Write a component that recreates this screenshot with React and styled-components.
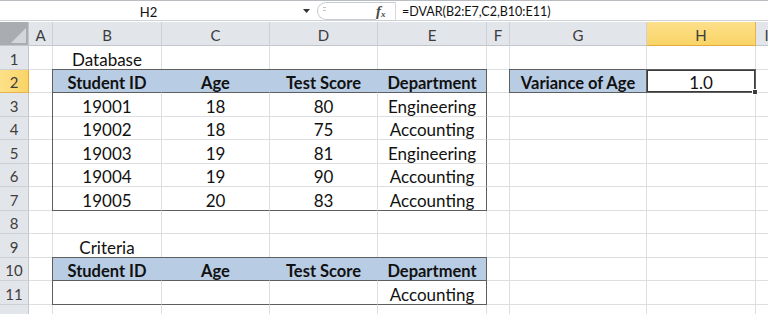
import React from 'react'
import styled, { createGlobalStyle } from 'styled-components';

const GRID = '#dcdfe2';
const DARK = '#5e5e5e';
const BLUE = '#b8cce4';
const HEAD_BG = '#e2e5e9';
const HEAD_LINE = '#c3c7cc';

const GlobalStyle = createGlobalStyle`
  body {
    margin: 0;
    background: #fff;
    overflow: hidden;
    font-family: Lato, "Liberation Sans", sans-serif;
  }
`;

const COLS = ['A', 'B', 'C', 'D', 'E', 'F', 'G', 'H', 'I'];
const COL_WIDTHS = '29px 24px 109px 108px 108px 109px 23px 137px 109px 22px';
const ROW_HEIGHTS = '24px 24px 23px 24px 23px 24px 23px 24px 23px 24px 23px 24px 30px';

// table ranges: header row first, then data rows
const tables = [
  {
    top: 2, left: 'B',
    rows: [
      ['Student ID', 'Age', 'Test Score', 'Department'],
      ['19001', '18', '80', 'Engineering'],
      ['19002', '18', '75', 'Accounting'],
      ['19003', '19', '81', 'Engineering'],
      ['19004', '19', '90', 'Accounting'],
      ['19005', '20', '83', 'Accounting'],
    ],
  },
  {
    top: 10, left: 'B',
    rows: [
      ['Student ID', 'Age', 'Test Score', 'Department'],
      ['', '', '', 'Accounting'],
    ],
  },
];

const buildCells = () => {
  const cells = {};
  const put = (r, c, spec) => { cells[`${c}${r}`] = spec; };
  put(1, 'B', { v: 'Database' });
  put(9, 'B', { v: 'Criteria' });
  tables.forEach((t) => {
    const c0 = COLS.indexOf(t.left);
    const last = t.rows.length - 1;
    t.rows.forEach((row, i) => {
      row.forEach((v, j) => {
        put(t.top + i, COLS[c0 + j], {
          v,
          fill: i === 0,
          bold: i === 0,
          t: i === 0,
          b: i === 0 || i === last,
          l: j === 0,
          r: j === row.length - 1,
        });
      });
    });
  });
  put(2, 'G', { v: 'Variance of Age', fill: true, bold: true, t: true, b: true, l: true, r: true });
  put(2, 'H', { v: '1.0', selected: true });
  return cells;
};

const cells = buildCells();

const App = () => {
  const rows = Array.from({ length: 12 }, (_, i) => i + 1);
  return (
    <Wrap>
      <GlobalStyle />
      <FormulaBar>
        <NameBox>H2</NameBox>
        <DropArrow>
          <svg width="7" height="4" viewBox="0 0 7 4"><path d="M0 0h7L3.5 4z" fill="#333" /></svg>
        </DropArrow>
        <Grip><GripMark /></Grip>
        <FxBox>
          <Fx>f<sub>x</sub></Fx>
        </FxBox>
        <Formula>=DVAR(B2:E7,C2,B10:E11)</Formula>
      </FormulaBar>
      <Sheet>
        <SelectAll>
          <svg width="28" height="23" viewBox="0 0 28 23">
            <path d="M26 6 L26 21 L11 21 Z" fill="#d3d6da" />
          </svg>
        </SelectAll>
        {COLS.map((c) => (
          <ColHead key={c} $active={c === 'H'}>{c}</ColHead>
        ))}
        {rows.map((r) => (
          <React.Fragment key={r}>
            <RowHead $active={r === 2}>{r}</RowHead>
            {COLS.map((c) => {
              const s = cells[`${c}${r}`] || {};
              return (
                <Cell
                  key={c}
                  $fill={s.fill}
                  $bold={s.bold}
                  $t={s.t}
                  $b={s.b}
                  $l={s.l}
                  $r={s.r}
                  $selected={s.selected}
                >
                  {s.v}
                  {s.selected && <FillHandle />}
                </Cell>
              );
            })}
          </React.Fragment>
        ))}
      </Sheet>
    </Wrap>
  );
};

const Wrap = styled.div`
  width: 768px;
  height: 314px;
  overflow: hidden;
`;

const FormulaBar = styled.div`
  display: flex;
  align-items: center;
  border-top: 1px solid #b9bcc0;
  border-bottom: 1px solid #cfd2d6;
  margin-bottom: 1px;
  box-sizing: border-box;
  height: 21px;
  font-size: 13px;
  color: #111;
`;

const NameBox = styled.div`
  width: 297px;
  text-align: center;
  padding-top: 2px;
`;

const DropArrow = styled.div`
  width: 18px;
  display: flex;
  justify-content: center;
`;

const Grip = styled.div`
  width: 58px;
  height: 16px;
  margin-left: 2px;
  border: 1px solid #c8cbcf;
  border-right: none;
  border-radius: 9px 0 0 9px;
  position: relative;
`;

const GripMark = styled.span`
  position: absolute;
  left: 5px;
  top: 4px;
  width: 3px;
  height: 2px;
  border-top: 1px solid #c2c2c2;
  border-bottom: 1px solid #c2c2c2;
`;

const FxBox = styled.div`
  width: 16px;
  height: 17px;
  display: flex;
  align-items: center;
  border-top: 1px solid #c8cbcf;
  border-bottom: 1px solid #c8cbcf;
  border-right: 1px solid #d6d8db;
  padding-right: 3px;
  margin-top: 1px;
`;

const Fx = styled.span`
  font-family: "Liberation Serif", serif;
  font-style: italic;
  font-weight: bold;
  font-size: 15px;
  color: #4a4a4a;
  sub {
    font-size: 9px;
    vertical-align: -1px;
  }
`;

const Formula = styled.div`
  padding-left: 6px;
  padding-top: 2px;
  font-size: 12.5px;
  white-space: nowrap;
`;

const Sheet = styled.div`
  display: grid;
  grid-template-columns: ${COL_WIDTHS};
  grid-template-rows: ${ROW_HEIGHTS};
`;

const SelectAll = styled.div`
  background: #a9acb0;
  border-right: 1px solid ${HEAD_LINE};
  border-bottom: 1px solid ${HEAD_LINE};
  svg { display: block; }
`;

const ColHead = styled.div`
  display: flex;
  align-items: center;
  justify-content: center;
  padding-top: 2px;
  font-size: 15px;
  color: #3d3d3d;
  background: ${(p) => (p.$active ? 'linear-gradient(#fde08a, #f9d466)' : HEAD_BG)};
  border-right: 1px solid ${(p) => (p.$active ? '#e7b44c' : '#cdd0d4')};
  border-bottom: 1px solid ${(p) => (p.$active ? '#e3a93a' : HEAD_LINE)};
`;

const RowHead = styled.div`
  display: flex;
  align-items: flex-end;
  justify-content: center;
  font-size: 15px;
  line-height: 1;
  padding-bottom: 2px;
  box-sizing: border-box;
  color: #3d3d3d;
  background: ${(p) => (p.$active ? 'linear-gradient(90deg, #fde08a, #f9d466)' : HEAD_BG)};
  border-right: 1px solid ${(p) => (p.$active ? '#e3a93a' : HEAD_LINE)};
  border-bottom: 1px solid ${(p) => (p.$active ? '#e7b44c' : '#cdd0d4')};
`;

const edgeShadow = (p) => {
  const s = [];
  if (p.$l || p.$selected) s.push(`-1px 0 0 ${DARK}`);
  if (p.$t || p.$selected) s.push(`0 -1px 0 ${DARK}`);
  if ((p.$l && p.$t) || p.$selected) s.push(`-1px -1px 0 ${DARK}`);
  if (p.$selected) s.push(`inset 0 0 0 1px #3c3c3c`);
  return s.length ? s.join(', ') : 'none';
};

const Cell = styled.div`
  position: relative;
  display: flex;
  align-items: flex-end;
  justify-content: center;
  box-sizing: border-box;
  padding-bottom: 1px;
  font-size: ${(p) => (p.$bold ? '16.5px' : '17px')};
  line-height: 1;
  white-space: nowrap;
  color: #111;
  font-weight: ${(p) => (p.$bold ? 700 : 400)};
  background: ${(p) => (p.$fill ? BLUE : '#fff')};
  border-right: 1px solid ${(p) => (p.$r || p.$selected ? DARK : p.$fill ? BLUE : GRID)};
  border-bottom: 1px solid ${(p) => (p.$b || p.$selected ? DARK : GRID)};
  box-shadow: ${edgeShadow};
`;

const FillHandle = styled.span`
  position: absolute;
  right: -3px;
  bottom: -3px;
  width: 4px;
  height: 4px;
  background: #3c3c3c;
  border: 1px solid #fff;
  z-index: 1;
`;

export default App
